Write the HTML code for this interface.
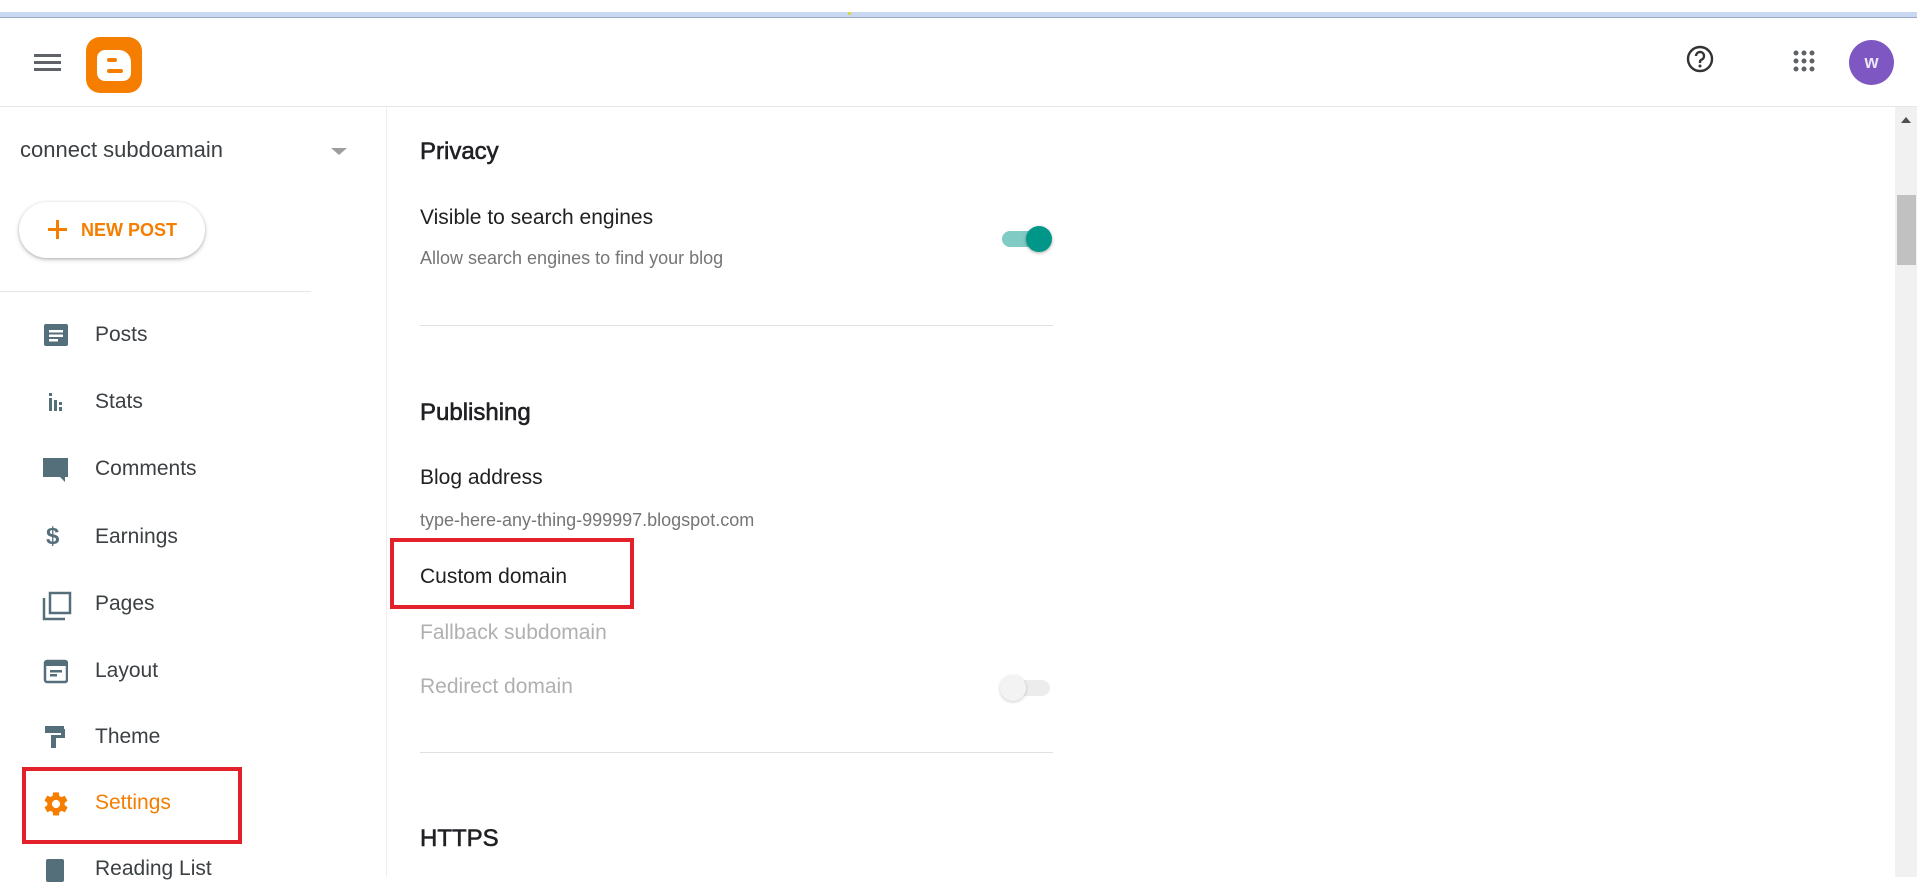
<!DOCTYPE html>
<html><head><meta charset="utf-8"><style>
*{margin:0;padding:0;box-sizing:border-box}
body{width:1917px;height:877px;overflow:hidden;background:#fff;font-family:"Liberation Sans",Arial,sans-serif;position:relative;color:#212121}
.a{position:absolute;white-space:nowrap}
.t{height:30px;line-height:30px}
.h{font-size:24px;color:#202124;-webkit-text-stroke:0.6px #202124}
.nav{position:absolute;left:0;width:300px;height:40px;line-height:40px;font-size:21px;color:#3c4043}
.nav svg{position:absolute;left:42px;top:7px}
.nav span{position:absolute;left:95px}
</style></head><body>
<div class="a" style="left:0;top:12px;width:1917px;height:6px;background:#c9d8f0;border-bottom:1px solid #9aa9c4"></div>
<div class="a" style="left:848px;top:12px;width:3px;height:3px;background:#d8d840"></div>
<div class="a" style="left:0;top:106px;width:1917px;height:1px;background:#e6e6e6"></div>
<div class="a" style="left:34px;top:54px;width:27px;height:3px;background:#5f6368"></div>
<div class="a" style="left:34px;top:61px;width:27px;height:3px;background:#5f6368"></div>
<div class="a" style="left:34px;top:68px;width:27px;height:3px;background:#5f6368"></div>
<div class="a" style="left:86px;top:37px;width:56px;height:56px;background:#f57d00;border-radius:14px"></div>
<div class="a" style="left:97px;top:50px;width:34px;height:31px;background:#fff;border-radius:8px 12px 8px 8px"></div>
<div class="a" style="left:107px;top:58px;width:10px;height:4px;background:#f57d00;border-radius:2px"></div>
<div class="a" style="left:107px;top:69px;width:16px;height:4px;background:#f57d00;border-radius:2px"></div>
<svg class="a" style="left:1686px;top:45px" width="28" height="28" viewBox="0 0 28 28"><circle cx="14" cy="14" r="12" fill="none" stroke="#333" stroke-width="2.4"/><path d="M10 11a4 4 0 1 1 5.5 3.7c-1 .5-1.5 1.2-1.5 2.3v1" fill="none" stroke="#333" stroke-width="2.4"/><circle cx="14" cy="21" r="1.5" fill="#333"/></svg>
<svg class="a" style="left:1793px;top:50px" width="24" height="24" viewBox="0 0 24 24" fill="#5f6368"><circle cx="3" cy="3" r="2.5"/><circle cx="11" cy="3" r="2.5"/><circle cx="19" cy="3" r="2.5"/><circle cx="3" cy="11" r="2.5"/><circle cx="11" cy="11" r="2.5"/><circle cx="19" cy="11" r="2.5"/><circle cx="3" cy="19" r="2.5"/><circle cx="11" cy="19" r="2.5"/><circle cx="19" cy="19" r="2.5"/></svg>
<div class="a" style="left:1849px;top:40px;width:45px;height:45px;border-radius:50%;background:#7e57c2;color:#ece6f6;font-weight:bold;font-size:18px;line-height:45px;text-align:center">w</div>
<div class="a" style="left:1895px;top:107px;width:22px;height:770px;background:#f1f1f1"></div>
<div class="a" style="left:1901px;top:117px;width:0;height:0;border-left:5px solid transparent;border-right:5px solid transparent;border-bottom:6px solid #505050"></div>
<div class="a" style="left:1897px;top:195px;width:19px;height:70px;background:#c1c1c1"></div>
<div class="a" style="left:386px;top:107px;width:1px;height:770px;background:#eee"></div>
<div class="a t" style="left:20px;top:135px;font-size:22px;color:#3c4043">connect subdoamain</div>
<div class="a" style="left:331px;top:148px;width:0;height:0;border-left:8px solid transparent;border-right:8px solid transparent;border-top:7px solid #9e9e9e"></div>
<div class="a" style="left:19px;top:202px;width:186px;height:56px;border-radius:28px;background:#fff;box-shadow:0 1px 3px rgba(0,0,0,.25),0 2px 6px rgba(0,0,0,.1)"></div>
<div class="a" style="left:48px;top:228px;width:19px;height:3px;background:#f57d00"></div>
<div class="a" style="left:56px;top:220px;width:3px;height:19px;background:#f57d00"></div>
<div class="a t" style="left:81px;top:215px;font-size:18px;font-weight:bold;color:#f57d00">NEW POST</div>
<div class="a" style="left:0;top:291px;width:311px;height:1px;background:#e6e6e6"></div>

<div class="nav" style="top:315px"><svg width="26" height="26" viewBox="0 0 26 26"><rect x="2" y="2" width="24" height="22" rx="2" fill="#546e7a"/><rect x="7" y="8" width="14" height="2.5" fill="#fff"/><rect x="7" y="12.5" width="14" height="2.5" fill="#fff"/><rect x="7" y="17" width="9" height="2.5" fill="#fff"/></svg><span>Posts</span></div>
<div class="nav" style="top:382px"><svg width="26" height="26" viewBox="0 0 26 26" fill="#546e7a"><rect x="7" y="4" width="3" height="3"/><rect x="7" y="9" width="3" height="13"/><rect x="12" y="11" width="3" height="11"/><rect x="17" y="13" width="3" height="3"/><rect x="17" y="18" width="3" height="4"/></svg><span>Stats</span></div>
<div class="nav" style="top:449px"><svg width="28" height="28" viewBox="0 0 28 28"><path d="M1 2h25v19h-3v5l-5-5H1z" fill="#546e7a"/></svg><span>Comments</span></div>
<div class="nav" style="top:517px"><span style="left:46px;font-weight:bold;color:#546e7a;font-size:24px">$</span><span>Earnings</span></div>
<div class="nav" style="top:584px"><svg width="30" height="30" viewBox="0 0 30 30" fill="none" stroke="#546e7a" stroke-width="2.5"><rect x="8" y="2" width="20" height="20"/><path d="M2 7v21h21"/></svg><span>Pages</span></div>
<div class="nav" style="top:651px"><svg width="26" height="26" viewBox="0 0 26 26"><rect x="3" y="3" width="22" height="21" rx="2" fill="none" stroke="#546e7a" stroke-width="2.5"/><rect x="3" y="3" width="22" height="5" fill="#546e7a"/><rect x="8" y="12" width="12" height="2.5" fill="#546e7a"/><rect x="8" y="16" width="7" height="2.5" fill="#546e7a"/></svg><span>Layout</span></div>
<div class="nav" style="top:717px"><svg width="26" height="26" viewBox="0 0 26 26" fill="#546e7a"><rect x="3" y="2" width="19" height="7"/><rect x="19" y="5" width="4" height="8"/><rect x="11" y="11" width="12" height="3"/><rect x="9" y="11" width="5" height="13"/></svg><span>Theme</span></div>
<div class="nav" style="top:783px;color:#f57d00"><svg width="28" height="28" viewBox="0 0 24 24"><path fill="#f57d00" d="M19.4 13c.04-.3.06-.6.06-1s-.02-.7-.06-1l2.1-1.6c.2-.15.25-.4.12-.6l-2-3.5c-.12-.2-.38-.3-.6-.2l-2.5 1c-.5-.4-1.1-.7-1.700-1l-.4-2.6C14.4 2.2 14.2 2 14 2h-4c-.25 0-.45.2-.5.4l-.4 2.6c-.6.25-1.2.6-1.7 1l-2.5-1c-.23-.1-.48 0-.6.2l-2 3.5c-.13.2-.07.45.12.6L4.6 11c-.04.3-.06.65-.06 1s.02.7.06 1l-2.1 1.6c-.2.15-.25.4-.12.6l2 3.5c.12.2.38.3.6.2l2.5-1c.5.4 1.1.7 1.7 1l.4 2.6c.05.24.25.4.5.4h4c.25 0 .45-.2.5-.4l.4-2.6c.6-.25 1.2-.6 1.7-1l2.5 1c.23.1.48 0 .6-.2l2-3.5c.12-.2.07-.45-.12-.6L19.4 13zM12 15.5A3.5 3.5 0 1 1 12 8.5a3.5 3.5 0 0 1 0 7z"/></svg><span>Settings</span></div>
<div class="nav" style="top:849px"><svg width="26" height="26" viewBox="0 0 26 26"><rect x="4" y="3" width="18" height="23" rx="2" fill="#546e7a"/></svg><span>Reading List</span></div>
<div class="a" style="left:22px;top:767px;width:220px;height:77px;border:4px solid #e2212b"></div>

<div class="a t h" style="left:420px;top:137px">Privacy</div>
<div class="a t" style="left:420px;top:203px;font-size:21px">Visible to search engines</div>
<div class="a t" style="left:420px;top:243px;font-size:18px;color:#757575">Allow search engines to find your blog</div>
<div class="a" style="left:1002px;top:231px;width:46px;height:16px;border-radius:8px;background:#80cbc4"></div>
<div class="a" style="left:1026px;top:226px;width:26px;height:26px;border-radius:50%;background:#009688;box-shadow:0 1px 3px rgba(0,0,0,.35)"></div>
<div class="a" style="left:420px;top:325px;width:633px;height:1px;background:#e0e0e0"></div>
<div class="a t h" style="left:420px;top:398px">Publishing</div>
<div class="a t" style="left:420px;top:463px;font-size:21px">Blog address</div>
<div class="a t" style="left:420px;top:505px;font-size:18px;color:#757575">type-here-any-thing-999997.blogspot.com</div>
<div class="a t" style="left:420px;top:562px;font-size:21px">Custom domain</div>
<div class="a" style="left:390px;top:538px;width:244px;height:71px;border:4px solid #e2212b"></div>
<div class="a t" style="left:420px;top:618px;font-size:21px;color:#b0b0b0">Fallback subdomain</div>
<div class="a t" style="left:420px;top:672px;font-size:21px;color:#b0b0b0">Redirect domain</div>
<div class="a" style="left:1004px;top:680px;width:46px;height:16px;border-radius:8px;background:#ececec"></div>
<div class="a" style="left:1000px;top:675px;width:26px;height:26px;border-radius:50%;background:#f3f3f3;box-shadow:0 1px 3px rgba(0,0,0,.2)"></div>
<div class="a" style="left:420px;top:752px;width:633px;height:1px;background:#e0e0e0"></div>
<div class="a t h" style="left:420px;top:824px">HTTPS</div>
</body></html>
